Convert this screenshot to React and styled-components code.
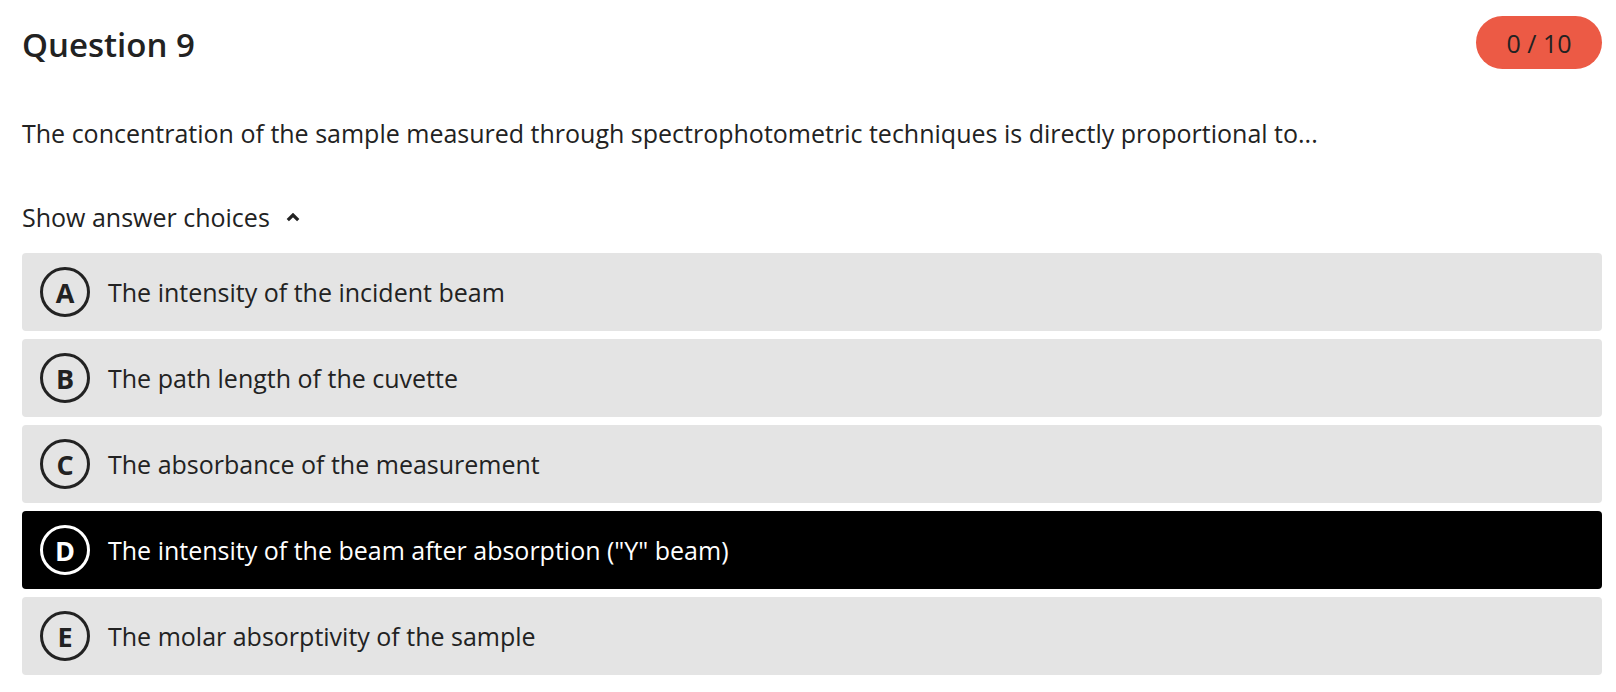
import React from "react";
import styled, { createGlobalStyle } from "styled-components";

const Global = createGlobalStyle`
  html, body { margin: 0; padding: 0; background: #fff; }
  body { font-family: "Open Sans", "Noto Sans", sans-serif; color: #222; }
`;

const Page = styled.div`
  padding: 16px 14px 0 22px;
`;

const Header = styled.div`
  display: flex;
  justify-content: space-between;
  align-items: center;
  height: 53px;
`;

const Title = styled.h1`
  margin: 0;
  font-size: 33px;
  font-weight: 600;
  color: #222;
  line-height: 1;
  padding-top: 4px;
`;

const Badge = styled.div`
  width: 126px;
  height: 53px;
  border-radius: 27px;
  background: #ec5a45;
  color: #222;
  font-size: 25px;
  display: flex;
  align-items: center;
  justify-content: center;
`;

const Prompt = styled.p`
  margin: 47px 0 0;
  font-size: 25px;
  line-height: 34px;
  color: #222;
`;

const Toggle = styled.button`
  margin: 51px 0 0;
  padding: 0;
  border: 0;
  background: none;
  font-family: inherit;
  font-size: 25px;
  line-height: 32px;
  color: #222;
  display: flex;
  align-items: center;
  gap: 16px;
  cursor: pointer;
`;

const Choices = styled.div`
  margin-top: 20px;
  display: flex;
  flex-direction: column;
  gap: 8px;
`;

const Choice = styled.div`
  height: 78px;
  border-radius: 4px;
  background: ${(p) => (p.$selected ? "#000" : "#e4e4e4")};
  color: ${(p) => (p.$selected ? "#fff" : "#222")};
  display: flex;
  align-items: center;
  padding: 0 18px;
  gap: 18px;
  font-size: 25px;
`;

const Letter = styled.span`
  box-sizing: border-box;
  width: 50px;
  height: 50px;
  border-radius: 50%;
  border: 3px solid currentColor;
  display: flex;
  align-items: center;
  justify-content: center;
  font-weight: 700;
  font-size: 27px;
  flex-shrink: 0;
`;

const choices = [
  ["A", "The intensity of the incident beam"],
  ["B", "The path length of the cuvette"],
  ["C", "The absorbance of the measurement"],
  ["D", 'The intensity of the beam after absorption ("Y" beam)'],
  ["E", "The molar absorptivity of the sample"],
];

export default function App() {
  return (
    <Page>
      <Global />
      <Header>
        <Title>Question 9</Title>
        <Badge>0 / 10</Badge>
      </Header>
      <Prompt>
        The concentration of the sample measured through spectrophotometric techniques is directly proportional to...
      </Prompt>
      <Toggle>
        Show answer choices
        <svg width="14" height="9" viewBox="0 0 14 9">
          <polyline points="1.8,7.2 7,2 12.2,7.2" fill="none" stroke="#222" strokeWidth="3.2" />
        </svg>
      </Toggle>
      <Choices>
        {choices.map(([l, t]) => (
          <Choice key={l} $selected={l === "D"}>
            <Letter>{l}</Letter>
            <span>{t}</span>
          </Choice>
        ))}
      </Choices>
    </Page>
  );
}
